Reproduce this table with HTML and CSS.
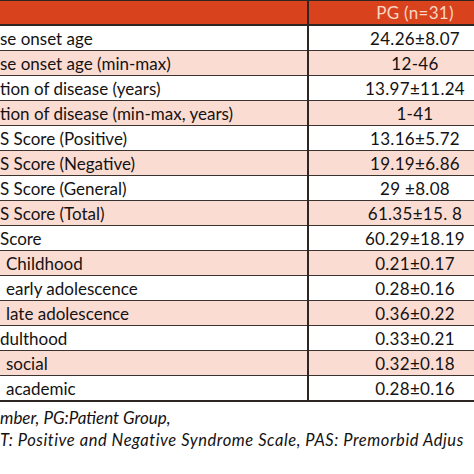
FILE: index.html
```html
<!DOCTYPE html>
<html>
<head>
<meta charset="utf-8">
<link rel="stylesheet" href="styles.css">
</head>
<body>
<div class="frame">
  <table class="stats">
    <thead>
      <tr><th class="label"></th><th class="value">PG (n=31)</th></tr>
    </thead>
    <tbody>
      <tr><td class="label">se onset age</td><td class="value">24.26±8.07</td></tr>
      <tr class="alt"><td class="label">se onset age (min-max)</td><td class="value">12-46</td></tr>
      <tr><td class="label">tion of disease (years)</td><td class="value">13.97±11.24</td></tr>
      <tr class="alt"><td class="label">tion of disease (min-max, years)</td><td class="value">1-41</td></tr>
      <tr><td class="label">S Score (Positive)</td><td class="value">13.16±5.72</td></tr>
      <tr class="alt"><td class="label">S Score (Negative)</td><td class="value">19.19±6.86</td></tr>
      <tr><td class="label">S Score (General)</td><td class="value">29 ±8.08</td></tr>
      <tr class="alt"><td class="label">S Score (Total)</td><td class="value">61.35±15. 8</td></tr>
      <tr><td class="label">Score</td><td class="value">60.29±18.19</td></tr>
      <tr class="alt"><td class="label sub">Childhood</td><td class="value">0.21±0.17</td></tr>
      <tr><td class="label sub">early adolescence</td><td class="value">0.28±0.16</td></tr>
      <tr class="alt"><td class="label sub">late adolescence</td><td class="value">0.36±0.22</td></tr>
      <tr><td class="label">dulthood</td><td class="value">0.33±0.21</td></tr>
      <tr class="alt"><td class="label sub">social</td><td class="value">0.32±0.18</td></tr>
      <tr class="last"><td class="label sub">academic</td><td class="value">0.28±0.16</td></tr>
    </tbody>
  </table>
  <div class="notes">
    <p class="note">mber, PG:Patient Group,</p>
    <p class="note wide">T: Positive and Negative Syndrome Scale, PAS: Premorbid Adjus</p>
  </div>
</div>
</body>
</html>
```
FILE: styles.css
```css
html, body {
  margin: 0;
  padding: 0;
  background: #ffffff;
}
body {
  font-family: Lato, "Open Sans", sans-serif;
  color: #141212;
}
.frame {
  width: 474px;
  height: 474px;
  overflow: hidden;
}
.stats {
  border-collapse: collapse;
  width: 521px;
  table-layout: fixed;
  font-size: 17px;
}
.stats th, .stats td {
  padding: 0;
  white-space: nowrap;
  overflow: hidden;
}
.stats thead tr {
  background: #d8431e;
  border-top: 1px solid #2e2622;
  border-bottom: 2px solid #2e2622;
}
.stats th {
  height: 23px;
  font-weight: normal;
  color: #fbd6c3;
}
.stats td {
  height: 24px;
}
.stats tbody tr {
  border-bottom: 1px solid #3a3330;
}
.stats tbody tr.last {
  border-bottom: 2px solid #2e2622;
}
.stats tr.alt {
  background: #fbdcd2;
}
.label {
  width: 307px;
  text-align: left;
  border-right: 2px solid #2e2622;
}
.label.sub {
  padding-left: 6px;
}
.value {
  text-align: center;
  letter-spacing: 0.3px;
}
.notes {
  padding-top: 5px;
}
.note {
  margin: 0;
  font-style: italic;
  font-size: 17px;
  line-height: 22px;
  white-space: nowrap;
}
.note.wide {
  font-size: 16.5px;
  letter-spacing: 0.55px;
}
```
